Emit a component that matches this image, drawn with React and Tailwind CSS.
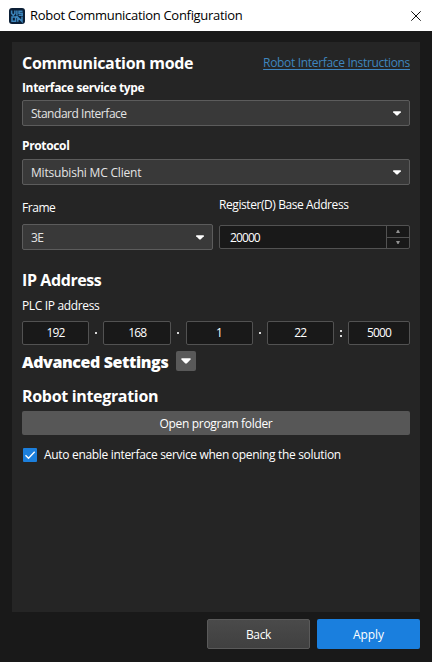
import React, { useState } from 'react';

const Caret = ({ className = 'w-2 h-[5px]' }) => (
  <svg viewBox="0 0 8 5" className={`fill-white ${className}`}>
    <path d="M0.2 0.3h7.6v0.9L4.6 4.6h-1.2L0.2 1.2z" />
  </svg>
);

const Select = ({ value, textClass = '' }) => (
  <button className="flex items-center justify-between h-[26px] pl-2 pr-2 rounded-[2px] border border-[#5c5c5c] bg-[#393939] text-[#e4e4e4]">
    <span className={`pt-px ${textClass}`}>{value}</span>
    <Caret />
  </button>
);

const Octet = ({ value, className = 'w-[67px]' }) => (
  <div
    className={`flex items-center justify-center h-6 rounded-[2px] border border-[#525252] bg-[#191919] tracking-[-0.9px] ${className}`}
  >
    {value}
  </div>
);

const Separator = ({ colon }) => (
  <div className="flex-1 flex flex-col items-center justify-center gap-[3px]">
    <span className="size-[2px] bg-[#d8d8d8]" />
    {colon && <span className="size-[2px] bg-[#d8d8d8]" />}
  </div>
);

const AppIcon = () => (
  <svg viewBox="0 0 16 16" className="size-4">
    <rect width="16" height="16" rx="3" fill="#0b1f36" />
    <g fill="none" stroke="#3d86bd" strokeWidth="1.5">
      <path d="M2.6 2.6v2.8l1.7 2 1.6-2V2.6M7.9 2.6v5M13.6 3.3H10v1.9h3.2v2H9.6" />
      <path d="M3 9h3.6v4.2H3zM8.8 13.8V9.2l4.2 4.2V8.6M7.6 8v2" />
    </g>
  </svg>
);

const App = () => {
  const [autoEnable, setAutoEnable] = useState(true);

  return (
    <div className="w-[432px] h-[662px] flex flex-col bg-[#191919] text-white text-[12px] leading-none whitespace-nowrap font-['Open_Sans','Noto_Sans',sans-serif] tracking-[-0.32px]">
      {/* Title bar */}
      <div className="flex items-center h-[31px] pl-[9px] pr-[11px] bg-white text-black">
        <AppIcon />
        <span className="ml-[5px] text-[13px] tracking-[-0.3px]">Robot Communication Configuration</span>
        <svg viewBox="0 0 10 10" className="size-[10px] ml-auto" stroke="#111" strokeWidth="1">
          <path d="M0.3 0.3l9.4 9.4M9.7 0.3L0.3 9.7" />
        </svg>
      </div>

      {/* Settings panel */}
      <div className="flex flex-col mt-[11px] mx-3 h-[570px] px-[10px] pt-[9px] bg-[#252525]">
        <div className="flex items-center justify-between h-6">
          <h1 className="text-[16px] font-bold">Communication mode</h1>
          <a className="text-[#3f85bf] underline underline-offset-2">Robot Interface Instructions</a>
        </div>

        <div className="flex items-center h-[25px] font-bold tracking-[-0.35px]">Interface service type</div>
        <Select value="Standard Interface" textClass="tracking-[-0.47px]" />

        <div className="flex items-center h-[33px] pt-[7px] font-bold tracking-[-0.35px]">Protocol</div>
        <Select value="Mitsubishi MC Client" textClass="tracking-[-0.2px]" />

        <div className="flex gap-[6px] mt-[13px]">
          <div className="flex flex-col w-[191px]">
            <div className="h-[26px] pt-[4px] tracking-[-0.45px]">Frame</div>
            <Select value="3E" textClass="tracking-[-0.6px]" />
          </div>
          <div className="flex flex-col w-[191px]">
            <div className="h-[27px] pt-[1px] tracking-[-0.42px]">Register(D) Base Address</div>
            <div className="flex h-6 rounded-[2px] border border-[#525252] bg-[#191919]">
              <span className="flex-1 flex items-center pl-[10px] pt-px tracking-[-0.9px]">20000</span>
              <div className="flex flex-col w-[23px] border-l border-[#525252]">
                <div className="flex-1 flex items-center justify-center border-b border-[#525252]">
                  <svg viewBox="0 0 4 3" className="w-1 h-[3px] fill-[#909090]"><path d="M0 3h4L2.5 0h-1z" /></svg>
                </div>
                <div className="flex-1 flex items-center justify-center">
                  <svg viewBox="0 0 4 3" className="w-1 h-[3px] fill-[#909090]"><path d="M0 0h4L2.5 3h-1z" /></svg>
                </div>
              </div>
            </div>
          </div>
        </div>

        {/* Controller address */}
        <h2 className="flex items-center h-[22px] mt-[19px] text-[16px] font-bold tracking-[-0.4px]">IP Address</h2>
        <div className="flex items-center h-[30px] tracking-[-0.35px]">PLC IP address</div>
        <div className="flex h-6">
          <Octet value="192" />
          <Separator />
          <Octet value="168" className="w-[68px]" />
          <Separator />
          <Octet value="1" />
          <Separator />
          <Octet value="22" />
          <Separator colon />
          <Octet value="5000" className="w-[62px]" />
        </div>

        <div className="flex items-center h-5 mt-[6px]">
          <h2 className="w-[154px] pt-[2px] text-[16px] font-extrabold tracking-[-0.4px]">Advanced Settings</h2>
          <button className="flex items-center justify-center size-5 rounded-[2px] bg-[#595959]">
            <Caret className="w-[10px] h-[6px]" />
          </button>
        </div>

        <h2 className="flex items-center h-6 mt-[13px] text-[16px] font-bold">Robot integration</h2>
        <button className="h-6 mt-[3px] pt-px rounded-[2px] bg-[#575757]">Open program folder</button>

        <label className="flex items-center h-[15px] mt-3 pl-px">
          <button
            onClick={() => setAutoEnable(!autoEnable)}
            className="flex items-center justify-center size-[14px] rounded-[1px] bg-[#1c7fdc]"
          >
            {autoEnable && (
              <svg viewBox="0 0 14 14" className="size-[14px]" fill="none" stroke="#fff" strokeWidth="1.3">
                <path d="M2.5 7.2l3 3.1 6.2-6.6" />
              </svg>
            )}
          </button>
          <span className="ml-[7px] pt-px">Auto enable interface service when opening the solution</span>
        </label>
      </div>

      {/* Footer */}
      <div className="flex justify-end gap-[7px] mt-[7px] mr-3">
        <button className="w-[103px] h-[30px] pt-px rounded-[2px] border border-[#5a5a5a] bg-linear-to-b from-[#4a4a4a] to-[#404040]">Back</button>
        <button className="w-[103px] h-[30px] pt-px rounded-[2px] bg-[#1a7fde] tracking-[-0.1px]">Apply</button>
      </div>
    </div>
  );
};

export default App;
